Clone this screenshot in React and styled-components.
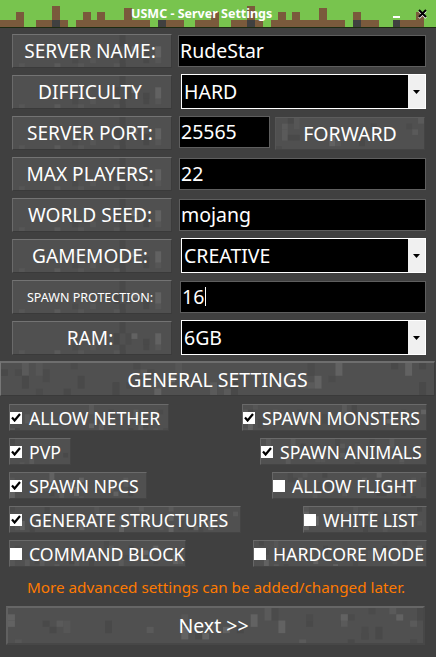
import styled, { createGlobalStyle } from "styled-components";

const FONT = `"Noto Sans", "DejaVu Sans", sans-serif`

const GlobalStyle = createGlobalStyle`
    html, body {
        margin: 0;
        padding: 0;
        background-color: #404040;
    }
`

const Window = styled.div`
    display: flex;
    flex-direction: column;
    width: 436px;
    height: 657px;
    overflow: hidden;
    background-color: #404040;
    font-family: ${FONT};
    color: white;
`
const TitleBar = styled.div`
    position: relative;
    flex: none;
    height: 27px;
    border-bottom: 1px solid #1d2b12;
    background-color: #78c44e;
`
const TitleArt = styled.svg`
    position: absolute;
    top: 0;
    left: 0;
`
const Title = styled.div`
    position: absolute;
    top: 6px;
    left: 131px;
    font-size: 12.5px;
    line-height: 15px;
    font-weight: 700;
    white-space: nowrap;
    color: white;
`
const Minimize = styled.span`
    position: absolute;
    top: 16px;
    left: 393px;
    width: 7px;
    height: 2px;
    background-color: white;
`
const Close = styled.svg`
    position: absolute;
    top: 9px;
    left: 418px;
`
const Form = styled.div`
    display: flex;
    flex-direction: column;
    gap: 7px;
    padding: 6px 10px 0 12px;
`
const Row = styled.div`
    display: flex;
    align-items: flex-start;
    height: 34px;
`
const Stone = styled.div`
    position: relative;
    flex: none;
    display: flex;
    align-items: center;
    overflow: hidden;
    box-sizing: border-box;
    background-color: #505050;
    border-style: solid;
    border-width: 1px;
    border-color: #737373 #3c3c3c #3a3a3a #6a6a6a;
`
const Speckle = styled.svg`
    position: absolute;
    top: 0;
    left: 0;
    width: 100%;
    height: 100%;
`
const StoneText = styled.span`
    position: relative;
    box-sizing: border-box;
    width: 100%;
    padding-right: ${props => props.$shift || 0}px;
    text-align: center;
    white-space: nowrap;
    font-size: ${props => props.$size || 19.5}px;
    color: white;
`
const LabelButton = styled(Stone)`
    width: 160px;
    height: 34px;
`
const ForwardButton = styled(Stone)`
    width: 150px;
    height: 33px;
    margin: 1px 0 0 5px;
    border-color: #5c5c5c #444 #444 #555;
`
const Field = styled.div`
    position: relative;
    box-sizing: border-box;
    display: flex;
    align-items: center;
    flex: ${props => props.$width ? 'none' : '1'};
    width: ${props => props.$width ? `${props.$width}px` : 'auto'};
    height: 32px;
    margin: ${props => props.$top ?? 1}px 0 0 ${props => props.$left ?? 7}px;
    padding: 0 0 2px 1px;
    background-color: black;
    border: 1px solid #5e5e5e;
    font-size: 19.5px;
    white-space: nowrap;
`
const Caret = styled.span`
    display: inline-block;
    width: 1px;
    height: 19px;
    margin-left: 1px;
    background-color: white;
`
const Select = styled.div`
    flex: 1;
    box-sizing: border-box;
    display: flex;
    height: 35px;
    margin: -1px 0 0 9px;
    border: 1px solid white;
    background-color: black;
    font-size: 19.5px;
`
const SelectValue = styled.div`
    flex: 1;
    display: flex;
    align-items: center;
    padding-left: 2px;
`
const SelectArrow = styled.div`
    flex: none;
    display: flex;
    align-items: center;
    justify-content: center;
    width: 17px;
    background-color: #f0f0f0;
`
const SectionHeader = styled(Stone)`
    width: 435px;
    height: 35px;
    margin-top: 6px;
    border-width: 2px 1px 1px 1px;
    border-color: #6e6e6e #3c3c3c #3a3a3a #777;
`
const Options = styled.div`
    display: flex;
    flex-direction: column;
    gap: 7px;
    padding: 8px 9px 0 9px;
`
const OptionRow = styled.div`
    display: flex;
    justify-content: space-between;
`
const Option = styled(Stone)`
    width: ${props => props.$width}px;
    height: 27px;
    gap: 7px;
    border-color: #6a6a6a #444 #444 #666;
`
const Box = styled.span`
    position: relative;
    flex: none;
    display: flex;
    align-items: center;
    justify-content: center;
    width: 12px;
    height: 12px;
    background-color: white;
`
const OptionText = styled.span`
    position: relative;
    white-space: nowrap;
    font-size: 17.7px;
    color: white;
`
const Note = styled.div`
    margin-top: 10px;
    height: 20px;
    padding-right: 4px;
    line-height: 20px;
    text-align: center;
    font-size: 15.25px;
    color: #ff7a00;
`
const NextButton = styled(Stone)`
    width: 419px;
    height: 39px;
    margin: 9px 0 0 6px;
    border-width: 2px;
    border-color: #666 #474747 #474747 #606060;
`

const dirt = [
    [0, 20, 17, 7], [16, 12, 8, 15], [36, 20, 32, 7], [52, 6, 8, 14],
    [76, 20, 74, 7], [83, 12, 8, 8], [97, 12, 8, 8], [124, 8, 8, 12],
    [166, 20, 18, 7], [195, 20, 24, 7], [211, 12, 8, 8], [231, 20, 32, 7], [247, 6, 8, 14],
    [271, 20, 74, 7], [278, 12, 8, 8], [292, 12, 8, 8], [319, 8, 8, 12],
    [353, 12, 8, 8], [361, 20, 18, 7], [400, 20, 24, 7], [416, 12, 8, 8],
]
const stones = [[52, 20, 8, 7], [158, 20, 8, 7], [247, 20, 8, 7], [353, 20, 8, 7], [393, 20, 7, 7]]

// small seeded generator so the stone texture stays the same on each render
function makeSpeckles(seed, width, height, size) {
    let value = seed
    const next = () => {
        value = (value * 16807) % 2147483647
        return value / 2147483647
    }
    const shades = ['#5a5a5a', '#494949', '#565656', '#626262', '#4b4b4b']
    const count = Math.round((width * height) / (size * size * 9))
    return Array.from({ length: count }, () => ({
        x: Math.floor(next() * width / size) * size,
        y: Math.floor(next() * height / size) * size,
        h: next() > 0.55 ? size * 2 : size,
        fill: shades[Math.floor(next() * shades.length)],
    }))
}

function Texture({ width, height, size = 6 }) {
    const speckles = makeSpeckles(width * 31 + height, width, height, size)
    return (
        <Speckle viewBox={`0 0 ${width} ${height}`} preserveAspectRatio="none">
            {speckles.map((s, i) => (
                <rect key={i} x={s.x} y={s.y} width={size} height={s.h} fill={s.fill} />
            ))}
        </Speckle>
    )
}

function Label({ children, size = 19.1 }) {
    return (
        <LabelButton>
            <Texture width={160} height={34} />
            <StoneText $size={size} $shift={4}>{children}</StoneText>
        </LabelButton>
    )
}

function Dropdown({ value }) {
    return (
        <Select>
            <SelectValue>{value}</SelectValue>
            <SelectArrow>
                <svg width="7" height="4" viewBox="0 0 7 4"><path d="M0 0h7L3.5 4z" fill="black" /></svg>
            </SelectArrow>
        </Select>
    )
}

function Toggle({ label, width, checked }) {
    return (
        <Option $width={width}>
            <Texture width={width} height={27} size={5} />
            <Box>
                {checked && (
                    <svg width="10" height="9" viewBox="0 0 10 9">
                        <path d="M1 4.5 3.6 7.5 9 1" fill="none" stroke="black" strokeWidth="2.2" />
                    </svg>
                )}
            </Box>
            <OptionText>{label}</OptionText>
        </Option>
    )
}

function App() {
    return (
        <Window>
            <GlobalStyle />
            <TitleBar>
                <TitleArt width="436" height="27" viewBox="0 0 436 27">
                    {dirt.map(([x, y, w, h]) => <rect key={`${x}-${y}`} x={x} y={y} width={w} height={h} fill="#7a5a3c" />)}
                    {stones.map(([x, y, w, h]) => <rect key={x} x={x} y={y} width={w} height={h} fill="#404040" />)}
                </TitleArt>
                <Title>USMC - Server Settings</Title>
                <Minimize />
                <Close width="10" height="10" viewBox="0 0 10 10">
                    <path d="M1 2 8 9M8 2 1 9" stroke="white" strokeWidth="2" />
                    <path d="M1 1 8 8M8 1 1 8" stroke="black" strokeWidth="2" />
                </Close>
            </TitleBar>
            <Form>
                <Row>
                    <Label>SERVER NAME:</Label>
                    <Field $left={6}>RudeStar</Field>
                </Row>
                <Row>
                    <Label>DIFFICULTY</Label>
                    <Dropdown value="HARD" />
                </Row>
                <Row>
                    <Label>SERVER PORT:</Label>
                    <Field $width={91} $top={0}>25565</Field>
                    <ForwardButton>
                        <Texture width={150} height={33} />
                        <StoneText>FORWARD</StoneText>
                    </ForwardButton>
                </Row>
                <Row>
                    <Label>MAX PLAYERS:</Label>
                    <Field>22</Field>
                </Row>
                <Row>
                    <Label>WORLD SEED:</Label>
                    <Field>mojang</Field>
                </Row>
                <Row>
                    <Label>GAMEMODE:</Label>
                    <Dropdown value="CREATIVE" />
                </Row>
                <Row>
                    <Label size={12.5}>SPAWN PROTECTION:</Label>
                    <Field $left={8}>16<Caret /></Field>
                </Row>
                <Row>
                    <Label>RAM:</Label>
                    <Dropdown value="6GB" />
                </Row>
            </Form>
            <SectionHeader>
                <Texture width={435} height={35} size={7} />
                <StoneText>GENERAL SETTINGS</StoneText>
            </SectionHeader>
            <Options>
                <OptionRow>
                    <Toggle label="ALLOW NETHER" width={160} checked />
                    <Toggle label="SPAWN MONSTERS" width={185} checked />
                </OptionRow>
                <OptionRow>
                    <Toggle label="PVP" width={62} checked />
                    <Toggle label="SPAWN ANIMALS" width={167} checked />
                </OptionRow>
                <OptionRow>
                    <Toggle label="SPAWN NPCS" width={138} checked />
                    <Toggle label="ALLOW FLIGHT" width={155} />
                </OptionRow>
                <OptionRow>
                    <Toggle label="GENERATE STRUCTURES" width={232} checked />
                    <Toggle label="WHITE LIST" width={124} />
                </OptionRow>
                <OptionRow>
                    <Toggle label="COMMAND BLOCK" width={177} />
                    <Toggle label="HARDCORE MODE" width={174} />
                </OptionRow>
            </Options>
            <Note>More advanced settings can be added/changed later.</Note>
            <NextButton>
                <Texture width={419} height={39} size={7} />
                <StoneText $shift={4}>Next &gt;&gt;</StoneText>
            </NextButton>
        </Window>
    )
}

export default App
